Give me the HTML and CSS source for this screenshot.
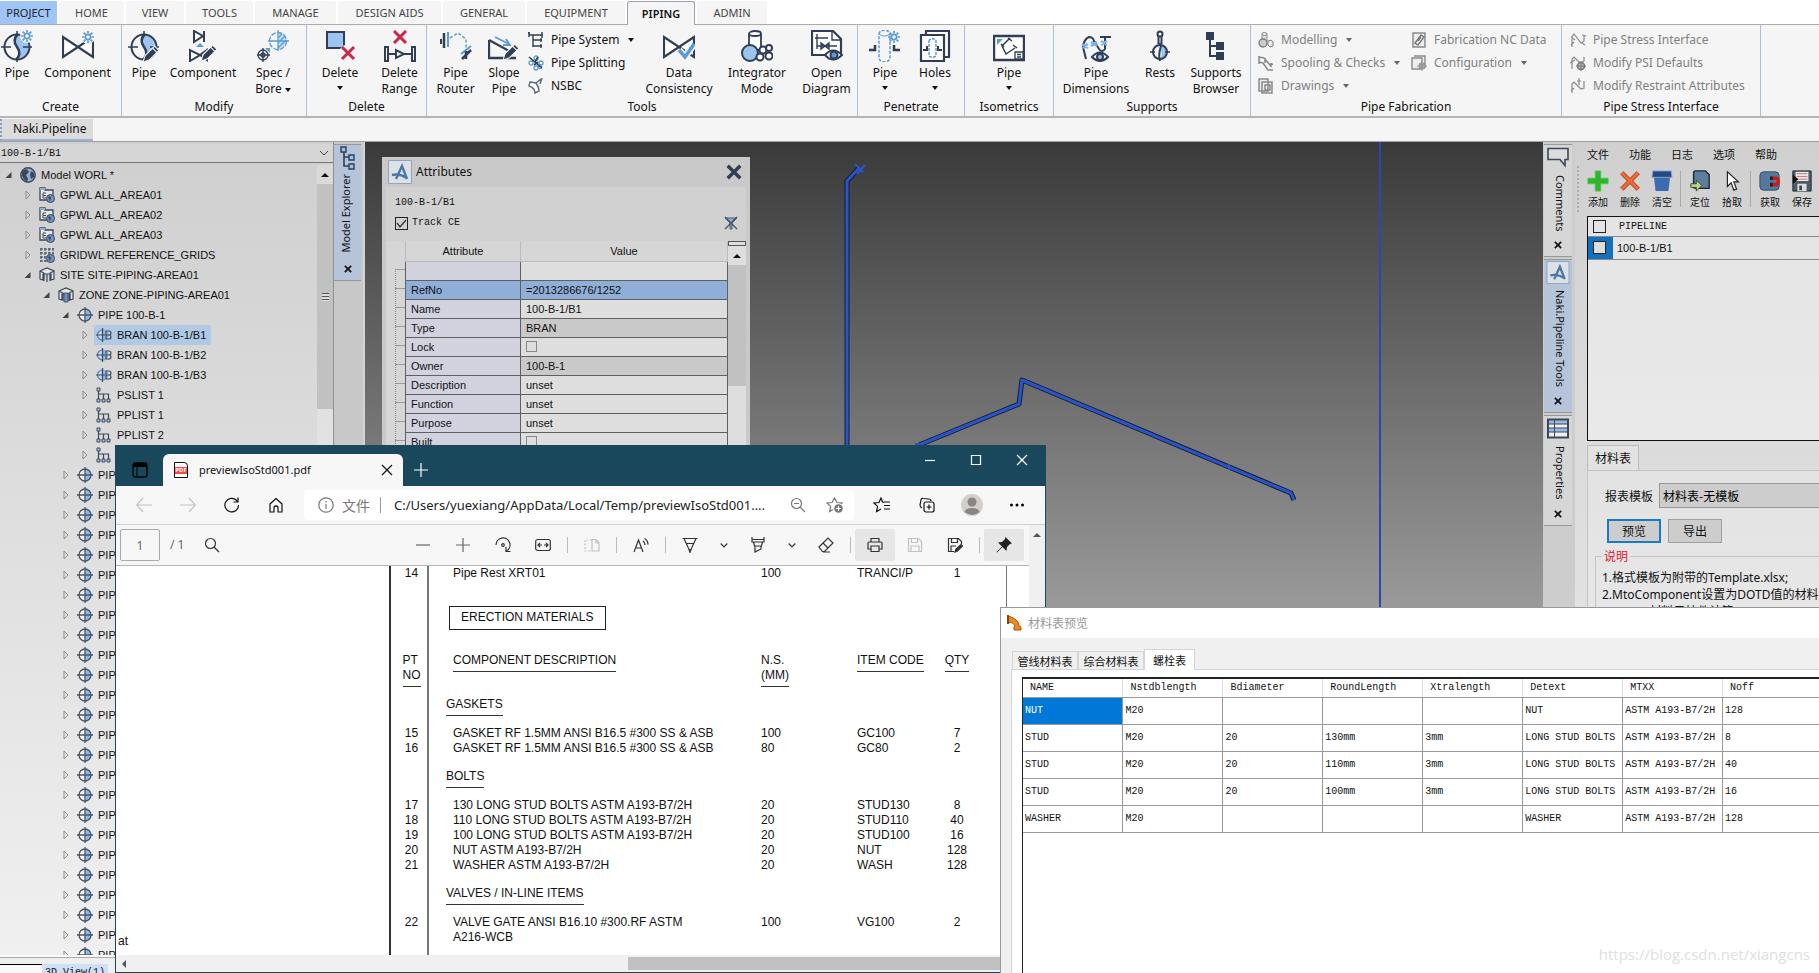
FILE: index.html
```
<!DOCTYPE html>
<html lang="zh">

<head>
    <meta charset="UTF-8">
    <meta name="viewport" content="width=device-width, initial-scale=1.0">
    <title>Naki.Pipeline</title>
    <link rel="stylesheet" href="styles.css">
</head>

<body>
    <!-- 图标 -->
    <svg class="defs" width="0" height="0">
        <symbol id="gear" viewBox="0 0 14 14"><circle cx="7" cy="7" r="3" fill="#fff" stroke="#5b9bd5" stroke-width="2"/><path d="M7 0v3M7 11v3M0 7h3M11 7h3M2 2l2 2M10 10l2 2M12 2l-2 2M4 10l-2 2" stroke="#5b9bd5" stroke-width="2"/></symbol>
        <symbol id="pencil" viewBox="0 0 16 16"><path d="M0 16l2-6 9-9 4 4-9 9z" fill="#2f3e55" stroke="#f5f5f5"/><path d="M9 3l4 4" stroke="#fff"/></symbol>
        <symbol id="ball" viewBox="0 0 32 32"><path d="M16 4a13 13 0 0 1 0 26c5-5 3-9 0-13s-3-9 0-13z" fill="#9cc4f0"/><circle cx="16" cy="17" r="12.500" fill="none" stroke="#2f3e55" stroke-width="2"/><path d="M17 4c-5 5-4 9-1 13s4 8-1 13" fill="none" stroke="#2f3e55" stroke-width="2.500"/><path d="M16 1v5M16 28v4M0 17h10M22 17h9" stroke="#2f3e55" stroke-width="1.500"/></symbol>
        <symbol id="valve" viewBox="0 0 32 32"><path d="M1 7v20L31 7v20z" fill="#fff" stroke="#2f3e55" stroke-width="2.200"/></symbol>
        <symbol id="i-pipe-new" viewBox="0 0 32 32"><use href="#ball"/><circle cx="26" cy="6" r="7" fill="#f5f5f5"/><use href="#gear" x="20" y="0" width="12" height="12"/></symbol>
        <symbol id="i-comp-new" viewBox="0 0 32 32"><use href="#valve"/><circle cx="26" cy="7" r="7" fill="#f5f5f5"/><use href="#gear" x="20" y="1" width="12" height="12"/></symbol>
        <symbol id="i-pipe-mod" viewBox="0 0 32 32"><use href="#ball"/><use href="#pencil" x="15" y="15" width="17" height="17"/></symbol>
        <symbol id="i-comp-mod" viewBox="0 0 32 32"><path d="M7 1v11l9-6zM17 1v11M3 20v11l10-6zM13 25l7 5v-10z" fill="#fff" stroke="#2f3e55" stroke-width="2"/><path d="M9 17l4-4 4 4z" fill="#5b9bd5"/><use href="#pencil" x="14" y="14" width="17" height="17"/></symbol>
        <symbol id="i-spec" viewBox="0 0 32 32"><path d="M21 2a9 9 0 0 1 0 18z" fill="#c4dcf6"/><g fill="none" stroke="#5b9bd5" stroke-width="1.300"><circle cx="21" cy="11" r="8.500" stroke-dasharray="5 1.500"/><path d="M21 0v21M11 11h21M21 18l8-8M21 13l7-7M21 8l4-4M14 11h6"/></g><path d="M8 18h5v5z" fill="#5b9bd5"/><g fill="none" stroke="#2f3e55" stroke-width="1.300"><circle cx="6" cy="25" r="5"/><circle cx="6" cy="25" r="2"/><path d="M6 18v14M0 25h13"/></g></symbol>
        <symbol id="i-delete" viewBox="0 0 32 32"><path d="M3 2h17v16H3z" fill="#9cc4f0" stroke="#2f3e55" stroke-width="2"/><path d="M18 17l12 12M30 17L18 29" stroke="#f5f5f5" stroke-width="6"/><path d="M18 17l12 12M30 17L18 29" stroke="#c8284b" stroke-width="3"/></symbol>
        <symbol id="i-del-range" viewBox="0 0 32 32"><path d="M10 1l12 12M22 1L10 13" stroke="#c8284b" stroke-width="3"/><path d="M1 17h3v14H1zM28 17h3v14h-3zM4 24h8M12 20v8l8-4zM20 24h8" fill="#fff" stroke="#2f3e55" stroke-width="2"/></symbol>
        <symbol id="i-router" viewBox="0 0 32 32"><path d="M4 3v15" stroke="#2f3e55" stroke-width="2.500"/><path d="M1 9v5" stroke="#2f3e55" stroke-width="2"/><path d="M8 2v15" stroke="#5b9bd5" stroke-width="2"/><path d="M10 8l8-5 8 6v9" fill="none" stroke="#5b9bd5" stroke-width="1.500" stroke-dasharray="3 2"/><path d="M21 24l10-8" stroke="#5b9bd5" stroke-width="2"/><path d="M22 29l9-9M26 21v8" stroke="#2f3e55" stroke-width="2.500"/></symbol>
        <symbol id="i-slope" viewBox="0 0 32 32"><path d="M1 10v18h27M1 10l22 12" fill="none" stroke="#2f3e55" stroke-width="2.300"/><path d="M7 7l14 7M15 15l7 0-4-6" fill="none" stroke="#5b9bd5" stroke-width="1.800"/><use href="#pencil" x="15" y="13" width="17" height="17"/></symbol>
        <symbol id="i-consist" viewBox="0 0 32 32"><use href="#valve"/><path d="M16 20l6 7 9-13" fill="none" stroke="#f5f5f5" stroke-width="7"/><path d="M16 20l6 7 9-13" fill="none" stroke="#5b9bd5" stroke-width="3.500"/></symbol>
        <symbol id="i-integr" viewBox="0 0 32 32"><path d="M8 4v16h12V4" fill="#fff" stroke="#2f3e55" stroke-width="1.800"/><ellipse cx="14" cy="3.500" rx="6" ry="2.500" fill="#fff" stroke="#2f3e55" stroke-width="1.800"/><circle cx="9" cy="23" r="8" fill="#9cc4f0" stroke="#2f3e55" stroke-width="2"/><g fill="#fff" stroke="#2f3e55" stroke-width="2"><circle cx="19" cy="27" r="3.500"/><circle cx="28" cy="26" r="3.500"/><circle cx="22" cy="20" r="3.500"/><circle cx="28" cy="18" r="3"/></g></symbol>
        <symbol id="i-diagram" viewBox="0 0 32 32"><path d="M1 1h21l8 8v16H1z" fill="#fff" stroke="#2f3e55" stroke-width="2.200"/><path d="M21 1v9h9M6 4v15M4 8h13M6 16h20M10 13v6l8-6v6z" fill="none" stroke="#2f3e55" stroke-width="1.400"/><path d="M14 25q8-9 17 0-9 9-17 0z" fill="#fff" stroke="#2f3e55" stroke-width="2"/><circle cx="23" cy="25" r="3.500" fill="#5b9bd5" stroke="#2f3e55" stroke-width="2"/></symbol>
        <symbol id="i-pen-pipe" viewBox="0 0 32 32"><path d="M10 4c0-5 11-5 11 0v24c0 5-11 5-11 0z" fill="none" stroke="#5b9bd5" stroke-width="1.500" stroke-dasharray="3 1.500"/><path d="M10 4q5 4 11 0" fill="none" stroke="#5b9bd5"/><path d="M0 20h6v-5M31 20h-6v-5" fill="none" stroke="#2f3e55" stroke-width="2.500"/><use href="#gear" x="19" y="1" width="12" height="12"/></symbol>
        <symbol id="i-holes" viewBox="0 0 32 32"><path d="M7 5V1h23v26h-5" fill="#fff" stroke="#2f3e55" stroke-width="2.200"/><path d="M2 5h23v26H2z" fill="#fff" stroke="#2f3e55" stroke-width="2.200"/><path d="M10 11c0-3 7-3 7 0v14c0 3-7 3-7 0z" fill="none" stroke="#5b9bd5" stroke-width="1.500" stroke-dasharray="3 1"/><path d="M4 20h4v-4M23 20h-4v-4" fill="none" stroke="#2f3e55" stroke-width="2"/></symbol>
        <symbol id="i-iso" viewBox="0 0 32 32"><path d="M1 6h30v24H1z" fill="#fff" stroke="#2f3e55" stroke-width="2.400"/><path d="M4 9h6l-6 6z" fill="#5b9bd5"/><path d="M17 8l-8 8 4 8 9-6M8 14l3 3M15 8l4 3M20 15l4 3" fill="none" stroke="#2f3e55" stroke-width="1.500"/><path d="M22 22h8v7h-8zM24 24.500h4M24 27h4" fill="#fff" stroke="#2f3e55" stroke-width="1.300"/></symbol>
        <symbol id="i-dims" viewBox="0 0 32 32"><path d="M6 29L3 17Q4 9 9 7q4 0 5 4l5 8q3 4 6 0V8M20 7h11" fill="none" stroke="#2f3e55" stroke-width="2"/><path d="M2 14l6 4M8 14l-6 4M11 12l6 4M17 12l-6 4M21 11l6 4M27 11l-6 4" stroke="#7fb5ee" stroke-width="2.500"/><path d="M12 27q8-9 16 0-8 8-16 0z" fill="#fff" stroke="#2f3e55" stroke-width="2"/><circle cx="20" cy="27" r="3" fill="#9cc4f0" stroke="#2f3e55" stroke-width="2"/></symbol>
        <symbol id="i-rests" viewBox="0 0 32 32"><path d="M16 15a7 7 0 0 1 0 15c3-5 1-8 0-15z" fill="#9cc4f0"/><g fill="none" stroke="#2f3e55" stroke-width="2"><circle cx="16" cy="4" r="2.500"/><path d="M14.500 6v8M17.500 6v8M16 13c3 4-3 8 0 18"/><circle cx="16" cy="22" r="7"/><path d="M6 22h5M21 22h5" stroke-width="1.500"/></g></symbol>
        <symbol id="i-browser" viewBox="0 0 32 32"><path d="M6 2h8v8H6zM16 12h8v8h-8zM16 22h8v8h-8z" fill="#2f3e55"/><path d="M10 8v18h7M10 16h7" fill="none" stroke="#2f3e55" stroke-width="2"/></symbol>
        <symbol id="s-system" viewBox="0 0 16 16"><path d="M0 1h2M1 0v5M1 3h14M14 0v6M5 3v12M5 8h9M13 6v4M5 14h9M13 12v4" fill="none" stroke="#2f3e55" stroke-width="1.400"/></symbol>
        <symbol id="s-split" viewBox="0 0 16 16"><g fill="none" stroke="#5b9bd5" stroke-width="1.300"><circle cx="3" cy="8" r="2"/><circle cx="8" cy="3" r="2"/><circle cx="13" cy="8" r="2"/><circle cx="8" cy="13" r="2"/><circle cx="12" cy="12" r="1.500"/></g><path d="M1 2l13 11M7 7l3-5M6 10l4-3" stroke="#2f3e55" stroke-width="1.600"/></symbol>
        <symbol id="s-nsbc" viewBox="0 0 16 16"><path d="M2 4l6 1q3 4 3 8l-4 2q0-5-6-7zM8 5l5-4M12 6l2-6" fill="#fff" stroke="#5f6b7c" stroke-width="1.500"/></symbol>
        <symbol id="s-model" viewBox="0 0 16 16"><path d="M4 2v7h5V2z" fill="#ddd" stroke="#8a8a8a"/><ellipse cx="6.500" cy="2" rx="2.500" ry="1.500" fill="#eee" stroke="#8a8a8a"/><circle cx="5" cy="11" r="4" fill="#ccc" stroke="#7d7d7d" stroke-width="1.300"/><path d="M10 9l3-1 2 2v4l-3 1-2-2z" fill="#eee" stroke="#7d7d7d"/></symbol>
        <symbol id="s-spool" viewBox="0 0 16 16"><path d="M1 1v8M1 2l5 1 6 7 3-1M1 7l4 1 5 7h5M7 3v5M13 8v4" fill="none" stroke="#8a8a8a" stroke-width="1.600"/></symbol>
        <symbol id="s-draw" viewBox="0 0 16 16"><path d="M1 1h9v12H1zM4 4h10v11H4zM7 7h5v5H7z" fill="#eee" stroke="#8a8a8a" stroke-width="1.500"/></symbol>
        <symbol id="s-nc" viewBox="0 0 16 16"><path d="M2 1h12v14H2z" fill="#eee" stroke="#8a8a8a" stroke-width="1.500"/><path d="M4 11l6-8 3 2-6 8zM7 9l3-4" fill="none" stroke="#777" stroke-width="1.400"/></symbol>
        <symbol id="s-conf" viewBox="0 0 16 16"><path d="M3 1h11v12M1 3h10v11H1z" fill="#eee" stroke="#8a8a8a" stroke-width="1.400"/><circle cx="11" cy="11" r="2.500" fill="none" stroke="#999" stroke-width="2"/><path d="M11 6v10M6 11h10M8 8l6 6M14 8l-6 6" stroke="#999"/></symbol>
        <symbol id="s-psi" viewBox="0 0 16 16"><path d="M2 15V5l2-3 7 9 3-2V3M1 13l3-3M1 5l4 3M12 3l4 1M12 11l3 2" fill="none" stroke="#8a8a8a" stroke-width="1.200"/></symbol>
        <symbol id="s-psi-set" viewBox="0 0 16 16"><path d="M2 14V4l2-2 6 6 4-2V2M0 8l5-3" fill="none" stroke="#8a8a8a" stroke-width="1.200"/><circle cx="11" cy="11" r="3.500" fill="#bbb" stroke="#777" stroke-width="1.600"/><path d="M11 6v10M6 11h10" stroke="#777"/></symbol>
        <symbol id="s-psi-mod" viewBox="0 0 16 16"><path d="M2 15V6l2-2 7 7 3-1V3M7 3h4M9 0v7M1 13l3-3" fill="none" stroke="#8a8a8a" stroke-width="1.200"/></symbol>

        <symbol id="t-world" viewBox="0 0 16 16"><circle cx="8" cy="8" r="7.200" fill="#8fb0d6" stroke="#3c4859" stroke-width="1.500"/><path d="M2 4l5-2 2 3-3 3 2 4-1 3Q3 12 2 9zM11 4l3 2v4l-3 2-1-4z" fill="#3c4859"/></symbol>
        <symbol id="t-gpwl" viewBox="0 0 16 16"><path d="M1 1h5v2h8v10H1z" fill="#e6e6e6" stroke="#3c4859" stroke-width="1.300"/><path d="M1 1h5v2H1z" fill="#8fb0d6"/><path d="M4 6v5h3M4 6h3M4 8.500h3" fill="none" stroke="#3c4859"/><circle cx="11.500" cy="11.500" r="4" fill="#6f94c2" stroke="#3c4859"/><path d="M9 10l2-1 1 2-1 3z" fill="#3c4859"/></symbol>
        <symbol id="t-grid" viewBox="0 0 16 16"><path d="M1 2h14M1 6h14M1 10h14M1 14h14M2 1v14M6 1v14M10 1v14M14 1v14" stroke="#3c4859" stroke-dasharray="3 1"/><circle cx="11.500" cy="11.500" r="4" fill="#6f94c2" stroke="#3c4859"/><path d="M9 10l2-1 1 2-1 3z" fill="#3c4859"/></symbol>
        <symbol id="t-site" viewBox="0 0 16 16"><path d="M1 4l7-3 7 3v8l-3 1V7H4v6l-3-1zM1 4l4 2v8M15 4l-4 2v8M8 7v8" fill="#e6e6e6" stroke="#3c4859" stroke-width="1.200"/></symbol>
        <symbol id="t-zone" viewBox="0 0 16 16"><path d="M1 4l7-3 7 3v8l-3 1V7H4v6l-3-1zM1 4l4 2v8M15 4l-4 2v8" fill="#e6e6e6" stroke="#3c4859" stroke-width="1.200"/><path d="M6 6h4v9H6z" fill="#6f94c2" stroke="#3c4859" stroke-width=".8"/></symbol>
        <symbol id="t-pipe" viewBox="0 0 16 16"><circle cx="8" cy="8" r="6" fill="#fff" fill-opacity=".5"/><path d="M8 2a6 6 0 0 1 0 12z" fill="#8fb8ea"/><circle cx="8" cy="8" r="6" fill="none" stroke="#4a5668" stroke-width="1.300"/><path d="M8 0v16M0 8h16" stroke="#4a5668" stroke-width="1.300"/></symbol>
        <symbol id="t-bran" viewBox="0 0 16 16"><circle cx="6.500" cy="8" r="5" fill="#c6d8ee" stroke="#5b7da8" stroke-width="1.200"/><path d="M7 3a5 5 0 0 1 0 10z" fill="#8fb8ea"/><path d="M6.500 1v14M0 8h9" stroke="#3c4859" stroke-width="1.200"/><path d="M10 4v8M10 4h3q2 0 2 2t-2 2h-3M13 8q2 0 2 2t-2 2h-3" fill="none" stroke="#3c4859" stroke-width="1.100"/></symbol>
        <symbol id="t-list" viewBox="0 0 16 16"><path d="M2.500 4v11M2.500 7h10v5M7.500 7v5" fill="none" stroke="#3c4859" stroke-width="1.200"/><path d="M1 1h3v3H1zM1 12h3v3H1zM6 12h3v3H6zM11 12h3v3h-3z" fill="#a9c6ea" stroke="#3c4859"/></symbol>
        <symbol id="open" viewBox="0 0 8 8"><path d="M6.500 1v6H.5z" fill="#444"/></symbol>
        <symbol id="shut" viewBox="0 0 8 8"><path d="M2 0v8l4-4z" fill="none" stroke="#8f8f8f"/></symbol>

        <symbol id="aveva" viewBox="0 0 24 24"><path d="M.5.500h23v23H.5z" fill="#dde1e6" stroke="#8fa3c0"/><path d="M8 19l6-13 5 13M4 15q7-2 15 3" fill="none" stroke="#4a76a8" stroke-width="2.400"/></symbol>
        <symbol id="cross" viewBox="0 0 14 14"><path d="M1.500 1.500l11 11M12.500 1.500l-11 11" stroke="currentColor" stroke-width="3"/></symbol>
        <symbol id="explorer" viewBox="0 0 16 24"><path d="M4 6v14h6M4 11h6" fill="none" stroke="#2f3e55" stroke-width="1.600"/><path d="M1 1h5v5H1zM9 9h5v5H9zM9 18h5v5H9z" fill="#9cc4f0" stroke="#2f3e55" stroke-width="1.400"/></symbol>
        <symbol id="comment" viewBox="0 0 24 22"><path d="M2 2h20v11h-3v6l-5-6H2z" fill="#dcdcdc" stroke="#3c4859" stroke-width="1.600"/></symbol>
        <symbol id="props" viewBox="0 0 24 22"><path d="M1 1h22v20H1z" fill="#3c4859"/><path d="M3 3h5v3H3zM9 3h12v3H9zM3 11h5v3H3zM9 11h12v3H9z" fill="#9cb9e4"/><path d="M3 7h5v3H3zM9 7h12v3H9zM3 15h5v4H3zM9 15h12v4H9z" fill="#eee"/></symbol>

        <symbol id="r-add" viewBox="0 0 24 24"><path d="M9 1h6v8h8v6h-8v8H9v-8H1V9h8z" fill="#2db52d" stroke="#4fc34f"/></symbol>
        <symbol id="r-del" viewBox="0 0 24 24"><path d="M3 3l18 18M21 3L3 21" stroke="#b33a16" stroke-width="5"/><path d="M3 3l18 18M21 3L3 21" stroke="#f06a3a" stroke-width="3"/></symbol>
        <symbol id="r-clear" viewBox="0 0 24 24"><path d="M3 6h18l-2 17H5z" fill="#3d6bb0"/><path d="M2 1h20l1 7H1z" fill="#234a86" stroke="#8fa9cc"/></symbol>
        <symbol id="r-locate" viewBox="0 0 24 24"><path d="M5 3q0-2 2-2h11l4 4v15H7q-2 0-2-2z" fill="#5e7c9c" stroke="#1b2633" stroke-width="1.500"/><path d="M2 15h6v-4l6 6-6 6v-4H2z" fill="#b9d48c" stroke="#34462a"/></symbol>
        <symbol id="r-pick" viewBox="0 0 24 24"><path d="M7 2v16l4-4 3 8 3-1-3-8h5z" fill="#fff" stroke="#222" stroke-width="1.300"/></symbol>
        <symbol id="r-fetch" viewBox="0 0 24 24"><rect x="1" y="2" width="21" height="20" rx="4" fill="#56789c" stroke="#2f4966"/><path d="M13 9h5q3 0 3 3.500t-3 3.500h-5" fill="none" stroke="#c81e1e" stroke-width="4"/><path d="M12 7h3v4h-3zM12 14h3v4h-3z" fill="#222"/></symbol>
        <symbol id="r-save" viewBox="0 0 24 24"><path d="M2 1h20v22H2z" fill="#4d5b6b" stroke="#1b2633"/><path d="M5 2h14v10H5z" fill="#eee"/><path d="M6 4h12M6 7h12M6 10h12" stroke="#c66"/><path d="M7 15h10v8H7z" fill="#ddd"/><path d="M9 17h3v5H9z" fill="#444"/><path d="M2 5l6 5-6 5z" fill="#111"/></symbol>
        <symbol id="elbow" viewBox="0 0 16 16"><path d="M1 1l3 1q8 3 8 9l2 1v3H7v-3l1-1q-1-3-5-4l-2 2z" fill="#ee8a1d" stroke="#a8540a"/><path d="M1 0v9" stroke="#8a4306" stroke-width="2"/></symbol>

        <symbol id="b-tabs" viewBox="0 0 16 16"><rect x="1" y="1" width="14" height="14" rx="2.500" fill="none" stroke="#000" stroke-width="1.400"/><path d="M1 1h14v4H1z"/><path d="M5 4v11" stroke="#000"/></symbol>
        <symbol id="b-close" viewBox="0 0 16 16"><path d="M3 3l10 10M13 3L3 13"/></symbol>
        <symbol id="b-plus" viewBox="0 0 16 16"><path d="M8 1v14M1 8h14"/></symbol>
        <symbol id="b-minus" viewBox="0 0 16 16"><path d="M1 8h14"/></symbol>
        <symbol id="b-min" viewBox="0 0 16 16"><path d="M3 8.500h10"/></symbol>
        <symbol id="b-max" viewBox="0 0 16 16"><path d="M3.500 3.500h9v9h-9z"/></symbol>
        <symbol id="b-back" viewBox="0 0 16 16"><path d="M16 8H1M7 1L.7 8 7 15"/></symbol>
        <symbol id="b-fwd" viewBox="0 0 16 16"><path d="M0 8h15M9 1l6.300 7L9 15"/></symbol>
        <symbol id="b-reload" viewBox="0 0 16 16"><path d="M14.500 8a6.800 6.800 0 1 1-2-4.700L14 5M14 .500V5h-4.500"/></symbol>
        <symbol id="b-home" viewBox="0 0 16 16"><path d="M2 7l6-5.500L14 7v8h-4v-5q-2-2-4 0v5H2z" stroke-linejoin="round"/></symbol>
        <symbol id="b-info" viewBox="0 0 16 16"><circle cx="8" cy="8" r="7.200"/><path d="M8 7v5M8 4v1.500"/></symbol>
        <symbol id="b-find" viewBox="0 0 16 16"><circle cx="6.500" cy="6.500" r="5"/><path d="M10 10l5 5"/></symbol>
        <symbol id="b-zoomout" viewBox="0 0 16 16"><circle cx="6.500" cy="6.500" r="5"/><path d="M10 10l5 5M4 6.500h5"/></symbol>
        <symbol id="b-star" viewBox="0 0 18 16"><path d="M15 7l1-1-5-.500L8.500 1 6 5.500 1 6l3.600 3.400-1 5.100L7 12.500"/><circle cx="12.500" cy="11.500" r="4.300" fill="currentColor" stroke="none"/><path d="M12.500 9v5M10 11.500h5" stroke="#fff"/></symbol>
        <symbol id="b-favs" viewBox="0 0 18 16"><path d="M11 5.500L9.500 5 8 1 6 5.500 1 6l3.600 3.400-1 5.100L8 12M11 5h6M11 8.500h6M11 12h6"/></symbol>
        <symbol id="b-coll" viewBox="0 0 16 16"><rect x="5" y="5" width="10" height="10" rx="2"/><path d="M10 7.500v5M7.500 10h5M3 11Q1 10 1 8l1-5q0-2 2-1.500l6 .500q2 0 2 2"/></symbol>
        <symbol id="b-rotate" viewBox="0 0 16 16"><path d="M1 8a7 7 0 1 1 10.500 6M11 10v4.500h4.500"/><circle cx="8" cy="8" r="1.300"/></symbol>
        <symbol id="b-fit" viewBox="0 0 16 16"><rect x=".7" y="2.500" width="14.600" height="11" rx="2"/><path d="M3 8h4M9 8h4M5 6L3 8l2 2M11 6l2 2-2 2"/></symbol>
        <symbol id="b-pages" viewBox="0 0 16 16"><path d="M8 3H1v11h7" stroke-dasharray="2 1.500"/><path d="M8 2.500h4l3 3V14H8zM12 2.500V6h3"/></symbol>
        <symbol id="b-read" viewBox="0 0 16 16"><path d="M1 15L5.500 3 10 15M2.500 11h6M10 4q2 1.500 2 4M11.500 1.500q3.500 2 3.500 6"/></symbol>
        <symbol id="b-pen" viewBox="0 0 16 16"><path d="M.5 1.500h15M2 1.500l5 11h2l5-11M4 6.500h8M7 12.500l1 3 1-3"/></symbol>
        <symbol id="b-mark" viewBox="0 0 16 16"><path d="M2 0v5h12V0M2 2.500h12M3.500 5l1 4h7l1-4M5 9v6l6-3V9"/></symbol>
        <symbol id="b-erase" viewBox="0 0 16 16"><path d="M1 10L10 1l5 5-8.500 8.500h-2zM5 6l5 5M5 15h7"/></symbol>
        <symbol id="b-chev" viewBox="0 0 8 8"><path d="M.7 2.500L4 5.800l3.300-3.300"/></symbol>
        <symbol id="b-print" viewBox="0 0 16 16"><path d="M4 5V1.500h8V5M4 12H1V6q0-1 1-1h12q1 0 1 1v6h-3M4 9h8v5.500H4z"/></symbol>
        <symbol id="b-save" viewBox="0 0 16 16"><path d="M1.500 1.500h10l3 3v10h-13zM4.500 1.500v4h6v-4M4 14.500V9h8v5.500"/></symbol>
        <symbol id="b-saveas" viewBox="0 0 16 16"><path d="M7 14.500H1.500v-13h10l3 3V7M4.500 1.500v4h6v-4M4 14.500V9h5"/><path d="M8 15l1-3 5-4.500 1.500 1.500-5 5z" fill="currentColor"/></symbol>
        <symbol id="b-pin" viewBox="0 0 16 16"><path d="M9.500 0L16 6.500 14 7l-3 3-.5 4L6.500 10 1 15.500l-.5-.5L6 9.500 2 5.500 6 5l3-3z" fill="#222"/></symbol>
        <symbol id="b-user" viewBox="0 0 22 22"><circle cx="11" cy="11" r="11" fill="#d2cfcc"/><circle cx="11" cy="8" r="4.500" fill="#8a8583"/><path d="M3.500 18q1-4 7.500-4t7.500 4q-7 6-15 0z" fill="#8a8583"/></symbol>
        <symbol id="b-dots" viewBox="0 0 16 16"><circle cx="2.500" cy="8" r="1.500"/><circle cx="8" cy="8" r="1.500"/><circle cx="13.500" cy="8" r="1.500"/></symbol>
    </svg>

    <nav class="tabs">
        <button class="project">PROJECT</button>
        <button class="t-home">HOME</button>
        <button class="t-view">VIEW</button>
        <button class="t-tools">TOOLS</button>
        <button class="t-manage">MANAGE</button>
        <button class="t-design">DESIGN AIDS</button>
        <button class="t-general">GENERAL</button>
        <button class="t-equip">EQUIPMENT</button>
        <button class="active">PIPING</button>
        <button class="t-admin">ADMIN</button>
    </nav>

    <div class="ribbon">
        <section class="group g-create">
            <div class="tools">
                <button><svg><use href="#i-pipe-new"/></svg>Pipe</button>
                <button><svg><use href="#i-comp-new"/></svg>Component</button>
            </div>
            <h2>Create</h2>
        </section>
        <section class="group g-modify">
            <div class="tools">
                <button><svg><use href="#i-pipe-mod"/></svg>Pipe</button>
                <button><svg><use href="#i-comp-mod"/></svg>Component</button>
                <button><svg><use href="#i-spec"/></svg>Spec /<span>Bore<i class="drop"></i></span></button>
            </div>
            <h2>Modify</h2>
        </section>
        <section class="group g-delete">
            <div class="tools">
                <button><svg><use href="#i-delete"/></svg>Delete<i class="drop below"></i></button>
                <button><svg><use href="#i-del-range"/></svg>Delete<br>Range</button>
            </div>
            <h2>Delete</h2>
        </section>
        <section class="group g-tools">
            <div class="tools">
                <button><svg><use href="#i-router"/></svg>Pipe<br>Router</button>
                <button><svg><use href="#i-slope"/></svg>Slope<br>Pipe</button>
                <div class="small">
                    <button><svg><use href="#s-system"/></svg>Pipe System<i class="drop"></i></button>
                    <button><svg><use href="#s-split"/></svg>Pipe Splitting</button>
                    <button><svg><use href="#s-nsbc"/></svg>NSBC</button>
                </div>
                <button><svg><use href="#i-consist"/></svg>Data<br>Consistency</button>
                <button><svg><use href="#i-integr"/></svg>Integrator<br>Mode</button>
                <button><svg><use href="#i-diagram"/></svg>Open<br>Diagram</button>
            </div>
            <h2>Tools</h2>
        </section>
        <section class="group g-penetrate">
            <div class="tools">
                <button><svg><use href="#i-pen-pipe"/></svg>Pipe<i class="drop below"></i></button>
                <button><svg><use href="#i-holes"/></svg>Holes<i class="drop below"></i></button>
            </div>
            <h2>Penetrate</h2>
        </section>
        <section class="group g-iso">
            <div class="tools">
                <button><svg><use href="#i-iso"/></svg>Pipe<i class="drop below"></i></button>
            </div>
            <h2>Isometrics</h2>
        </section>
        <section class="group g-supports">
            <div class="tools">
                <button><svg><use href="#i-dims"/></svg>Pipe<br>Dimensions</button>
                <button><svg><use href="#i-rests"/></svg>Rests</button>
                <button><svg><use href="#i-browser"/></svg>Supports<br>Browser</button>
            </div>
            <h2>Supports</h2>
        </section>
        <section class="group g-fab">
            <div class="tools">
                <div class="small off">
                    <button><svg><use href="#s-model"/></svg>Modelling<i class="drop"></i></button>
                    <button><svg><use href="#s-spool"/></svg>Spooling &amp; Checks<i class="drop"></i></button>
                    <button><svg><use href="#s-draw"/></svg>Drawings<i class="drop"></i></button>
                </div>
                <div class="small off">
                    <button><svg><use href="#s-nc"/></svg>Fabrication NC Data</button>
                    <button><svg><use href="#s-conf"/></svg>Configuration<i class="drop"></i></button>
                </div>
            </div>
            <h2>Pipe Fabrication</h2>
        </section>
        <section class="group g-stress">
            <div class="tools">
                <div class="small off">
                    <button><svg><use href="#s-psi"/></svg>Pipe Stress Interface</button>
                    <button><svg><use href="#s-psi-set"/></svg>Modify PSI Defaults</button>
                    <button><svg><use href="#s-psi-mod"/></svg>Modify Restraint Attributes</button>
                </div>
            </div>
            <h2>Pipe Stress Interface</h2>
        </section>
    </div>

    <div class="addin"><button>Naki.Pipeline</button></div>

    <main class="work">
        <!-- 模型树 -->
        <aside class="explorer">
            <select class="current" aria-label="Current element"><option>100-B-1/B1</option></select>
            <div class="tree-wrap">
                <ul class="tree">
                    <li><svg class="tw"><use href="#open"/></svg><svg><use href="#t-world"/></svg><span>Model WORL *</span></li>
                    <li class="l1"><svg class="tw"><use href="#shut"/></svg><svg><use href="#t-gpwl"/></svg><span>GPWL ALL_AREA01</span></li>
                    <li class="l1"><svg class="tw"><use href="#shut"/></svg><svg><use href="#t-gpwl"/></svg><span>GPWL ALL_AREA02</span></li>
                    <li class="l1"><svg class="tw"><use href="#shut"/></svg><svg><use href="#t-gpwl"/></svg><span>GPWL ALL_AREA03</span></li>
                    <li class="l1"><svg class="tw"><use href="#shut"/></svg><svg><use href="#t-grid"/></svg><span>GRIDWL REFERENCE_GRIDS</span></li>
                    <li class="l1"><svg class="tw"><use href="#open"/></svg><svg><use href="#t-site"/></svg><span>SITE SITE-PIPING-AREA01</span></li>
                    <li class="l2"><svg class="tw"><use href="#open"/></svg><svg><use href="#t-zone"/></svg><span>ZONE ZONE-PIPING-AREA01</span></li>
                    <li class="l3"><svg class="tw"><use href="#open"/></svg><svg><use href="#t-pipe"/></svg><span>PIPE 100-B-1</span></li>
                    <li class="l4"><svg class="tw"><use href="#shut"/></svg><div class="sel"><svg><use href="#t-bran"/></svg><span>BRAN 100-B-1/B1</span></div></li>
                    <li class="l4"><svg class="tw"><use href="#shut"/></svg><svg><use href="#t-bran"/></svg><span>BRAN 100-B-1/B2</span></li>
                    <li class="l4"><svg class="tw"><use href="#shut"/></svg><svg><use href="#t-bran"/></svg><span>BRAN 100-B-1/B3</span></li>
                    <li class="l4"><svg class="tw"><use href="#shut"/></svg><svg><use href="#t-list"/></svg><span>PSLIST 1</span></li>
                    <li class="l4"><svg class="tw"><use href="#shut"/></svg><svg><use href="#t-list"/></svg><span>PPLIST 1</span></li>
                    <li class="l4"><svg class="tw"><use href="#shut"/></svg><svg><use href="#t-list"/></svg><span>PPLIST 2</span></li>
                    <li class="l4"><svg class="tw"><use href="#shut"/></svg><svg><use href="#t-list"/></svg></li>
                    <li class="l3"><svg class="tw"><use href="#shut"/></svg><svg><use href="#t-pipe"/></svg><span>PIPE</span></li>
                    <li class="l3"><svg class="tw"><use href="#shut"/></svg><svg><use href="#t-pipe"/></svg><span>PIPE</span></li>
                    <li class="l3"><svg class="tw"><use href="#shut"/></svg><svg><use href="#t-pipe"/></svg><span>PIPE</span></li>
                    <li class="l3"><svg class="tw"><use href="#shut"/></svg><svg><use href="#t-pipe"/></svg><span>PIPE</span></li>
                    <li class="l3"><svg class="tw"><use href="#shut"/></svg><svg><use href="#t-pipe"/></svg><span>PIPE</span></li>
                    <li class="l3"><svg class="tw"><use href="#shut"/></svg><svg><use href="#t-pipe"/></svg><span>PIPE</span></li>
                    <li class="l3"><svg class="tw"><use href="#shut"/></svg><svg><use href="#t-pipe"/></svg><span>PIPE</span></li>
                    <li class="l3"><svg class="tw"><use href="#shut"/></svg><svg><use href="#t-pipe"/></svg><span>PIPE</span></li>
                    <li class="l3"><svg class="tw"><use href="#shut"/></svg><svg><use href="#t-pipe"/></svg><span>PIPE</span></li>
                    <li class="l3"><svg class="tw"><use href="#shut"/></svg><svg><use href="#t-pipe"/></svg><span>PIPE</span></li>
                    <li class="l3"><svg class="tw"><use href="#shut"/></svg><svg><use href="#t-pipe"/></svg><span>PIPE</span></li>
                    <li class="l3"><svg class="tw"><use href="#shut"/></svg><svg><use href="#t-pipe"/></svg><span>PIPE</span></li>
                    <li class="l3"><svg class="tw"><use href="#shut"/></svg><svg><use href="#t-pipe"/></svg><span>PIPE</span></li>
                    <li class="l3"><svg class="tw"><use href="#shut"/></svg><svg><use href="#t-pipe"/></svg><span>PIPE</span></li>
                    <li class="l3"><svg class="tw"><use href="#shut"/></svg><svg><use href="#t-pipe"/></svg><span>PIPE</span></li>
                    <li class="l3"><svg class="tw"><use href="#shut"/></svg><svg><use href="#t-pipe"/></svg><span>PIPE</span></li>
                    <li class="l3"><svg class="tw"><use href="#shut"/></svg><svg><use href="#t-pipe"/></svg><span>PIPE</span></li>
                    <li class="l3"><svg class="tw"><use href="#shut"/></svg><svg><use href="#t-pipe"/></svg><span>PIPE</span></li>
                    <li class="l3"><svg class="tw"><use href="#shut"/></svg><svg><use href="#t-pipe"/></svg><span>PIPE</span></li>
                    <li class="l3"><svg class="tw"><use href="#shut"/></svg><svg><use href="#t-pipe"/></svg><span>PIPE</span></li>
                    <li class="l3"><svg class="tw"><use href="#shut"/></svg><svg><use href="#t-pipe"/></svg><span>PIPE</span></li>
                    <li class="l3"><svg class="tw"><use href="#shut"/></svg><svg><use href="#t-pipe"/></svg><span>PIPE</span></li>
                    <li class="l3"><svg class="tw"><use href="#shut"/></svg><svg><use href="#t-pipe"/></svg><span>PIPE</span></li>
                    <li class="l3"><svg class="tw"><use href="#shut"/></svg><svg><use href="#t-pipe"/></svg><span>PIPE</span></li>
                    <li class="l3"><svg class="tw"><use href="#shut"/></svg><svg><use href="#t-pipe"/></svg><span>PIPE</span></li>
                </ul>
                <div class="scroll"><i class="up"></i><div class="thumb"><i class="grip"></i></div></div>
            </div>
        </aside>
        <div class="strip left">
            <div class="side on">
                <svg class="tall"><use href="#explorer"/></svg>
                <span class="turn-up">Model Explorer</span>
                <button aria-label="Close Model Explorer"><svg><use href="#cross"/></svg></button>
            </div>
        </div>

        <!-- 三维视图 -->
        <div class="view">
            <svg class="scene">
                <path d="M1015 0v830" stroke="#2b49a8" stroke-width="2"/>
                <g fill="none" stroke-linejoin="round">
                    <path d="M494 26l-12 13v320M554 303l100-41 3-24 269 113 3 7" stroke="#131c3c" stroke-width="5"/>
                    <path d="M494 26l-12 13v320M554 303l100-41 3-24 269 113 3 7" stroke="#2c55c4" stroke-width="3"/>
                    <path d="M490 22l8 8M492 32l8-9M864 322v6M550 302h8" stroke="#2c55c4" stroke-width="2"/>
                </g>
            </svg>
            <section class="attrs">
                <header>
                    <svg class="logo"><use href="#aveva"/></svg>
                    <h3>Attributes</h3>
                    <button aria-label="Close"><svg><use href="#cross"/></svg></button>
                </header>
                <div class="attrs-top">
                    <div class="elem">100-B-1/B1</div>
                    <label><input type="checkbox" checked>Track CE</label>
                    <svg class="filter" viewBox="0 0 14 14"><path d="M1 2h12L8 7v6H6V7z" fill="#8fb0d6" stroke="#4a5668"/><path d="M1 1l12 12M13 1L1 13" stroke="#4a5668" stroke-width="1.400"/></svg>
                </div>
                <div class="attrs-grid">
                    <div class="gutter"></div>
                    <table>
                        <thead><tr><th class="name">Attribute</th><th>Value</th></tr></thead>
                        <tbody>
                            <tr><td></td><td></td></tr>
                            <tr class="hit"><td>RefNo</td><td>=2013286676/1252</td></tr>
                            <tr><td>Name</td><td>100-B-1/B1</td></tr>
                            <tr class="ro"><td>Type</td><td>BRAN</td></tr>
                            <tr><td>Lock</td><td><input type="checkbox" aria-label="Lock"></td></tr>
                            <tr class="ro"><td>Owner</td><td>100-B-1</td></tr>
                            <tr><td>Description</td><td>unset</td></tr>
                            <tr><td>Function</td><td>unset</td></tr>
                            <tr><td>Purpose</td><td>unset</td></tr>
                            <tr><td>Built</td><td><input type="checkbox" aria-label="Built"></td></tr>
                        </tbody>
                    </table>
                    <div class="scroll"><i class="split"></i><i class="up"></i><div class="thumb"></div></div>
                </div>
            </section>
        </div>

        <div class="strip right">
            <div class="side">
                <svg class="wide"><use href="#comment"/></svg>
                <span>Comments</span>
                <button aria-label="Close Comments"><svg><use href="#cross"/></svg></button>
            </div>
            <div class="side on">
                <svg class="wide"><use href="#aveva"/></svg>
                <span>Naki.Pipeline Tools</span>
                <button aria-label="Close Tools"><svg><use href="#cross"/></svg></button>
            </div>
            <div class="side">
                <svg class="wide"><use href="#props"/></svg>
                <span>Properties</span>
                <button aria-label="Close Properties"><svg><use href="#cross"/></svg></button>
            </div>
        </div>

        <!-- 管道工具 -->
        <aside class="naki">
            <div class="menu"><button>文件</button><button>功能</button><button>日志</button><button>选项</button><button>帮助</button></div>
            <div class="bar">
                <button><svg><use href="#r-add"/></svg>添加</button>
                <button><svg><use href="#r-del"/></svg>删除</button>
                <button><svg><use href="#r-clear"/></svg>清空</button>
                <i></i>
                <button><svg><use href="#r-locate"/></svg>定位</button>
                <button><svg><use href="#r-pick"/></svg>拾取</button>
                <i></i>
                <button><svg><use href="#r-fetch"/></svg>获取</button>
                <button><svg><use href="#r-save"/></svg>保存</button>
            </div>
            <div class="pipes">
                <table>
                    <tr><th class="chk"><input type="checkbox" aria-label="All"></th><th>PIPELINE</th></tr>
                    <tr><td class="chk"><input type="checkbox" aria-label="100-B-1/B1"></td><td>100-B-1/B1</td></tr>
                </table>
            </div>
            <button class="mto-tab">材料表</button>
            <div class="mto">
                <div class="field"><label for="tpl">报表模板</label><select id="tpl"><option>材料表-无模板</option></select></div>
                <div class="acts"><button class="main">预览</button><button>导出</button></div>
                <fieldset>
                    <legend>说明</legend>
                    <p>1.格式模板为附带的Template.xlsx;</p>
                    <p>2.MtoComponent设置为DOTD值的材料不统计;</p>
                    <p>3.STUDS材料只按件计算;</p>
                </fieldset>
            </div>
        </aside>
    </main>
    <footer class="views"><div class="blank"></div><button>3D View(1)</button></footer>

    <!-- PDF 窗口 -->
    <section class="edge">
        <header class="edge-title">
            <svg class="ic"><use href="#b-tabs"/></svg>
            <div class="edge-tab">
                <i class="pdf-ico">PDF</i>
                <span>previewIsoStd001.pdf</span>
                <button aria-label="Close tab"><svg class="ic line"><use href="#b-close"/></svg></button>
            </div>
            <button class="new" aria-label="New tab"><svg class="ic line"><use href="#b-plus"/></svg></button>
            <div class="win">
                <button aria-label="Minimize"><svg class="ic line"><use href="#b-min"/></svg></button>
                <button aria-label="Maximize"><svg class="ic line"><use href="#b-max"/></svg></button>
                <button aria-label="Close"><svg class="ic line"><use href="#b-close"/></svg></button>
            </div>
        </header>
        <div class="edge-nav">
            <button class="faint" aria-label="Back"><svg class="ic line"><use href="#b-back"/></svg></button>
            <button class="faint" aria-label="Forward"><svg class="ic line"><use href="#b-fwd"/></svg></button>
            <button aria-label="Reload"><svg class="ic line"><use href="#b-reload"/></svg></button>
            <button aria-label="Home"><svg class="ic line"><use href="#b-home"/></svg></button>
            <div class="addr">
                <svg class="ic line"><use href="#b-info"/></svg>
                <span>文件</span>
                <input type="text" aria-label="Address" value="C:/Users/yuexiang/AppData/Local/Temp/previewIsoStd001....">
                <svg class="ic line"><use href="#b-zoomout"/></svg>
                <svg class="ic line"><use href="#b-star"/></svg>
            </div>
            <button aria-label="Favorites"><svg class="wide-ic line"><use href="#b-favs"/></svg></button>
            <button aria-label="Collections"><svg class="ic line"><use href="#b-coll"/></svg></button>
            <button aria-label="Profile"><svg class="user"><use href="#b-user"/></svg></button>
            <button aria-label="More"><svg class="ic"><use href="#b-dots"/></svg></button>
        </div>
        <div class="edge-body">
            <div class="edge-main">
                <div class="pdf-bar">
                    <input type="text" aria-label="Page" value="1"><span class="of">/ 1</span>
                    <button aria-label="Find"><svg class="ic line"><use href="#b-find"/></svg></button>
                    <div class="pdf-tools">
                        <button class="dim" aria-label="Zoom out"><svg class="ic line"><use href="#b-minus"/></svg></button>
                        <button class="dim" aria-label="Zoom in"><svg class="ic line"><use href="#b-plus"/></svg></button>
                        <button aria-label="Rotate"><svg class="ic line"><use href="#b-rotate"/></svg></button>
                        <button aria-label="Fit"><svg class="ic line"><use href="#b-fit"/></svg></button>
                        <i></i>
                        <button class="faint" aria-label="Page view"><svg class="ic line"><use href="#b-pages"/></svg></button>
                        <i></i>
                        <button aria-label="Read aloud"><svg class="ic line"><use href="#b-read"/></svg></button>
                        <i></i>
                        <button aria-label="Draw"><svg class="ic line"><use href="#b-pen"/></svg></button>
                        <button class="chev" aria-label="Draw options"><svg class="line"><use href="#b-chev"/></svg></button>
                        <button aria-label="Highlight"><svg class="ic line"><use href="#b-mark"/></svg></button>
                        <button class="chev" aria-label="Highlight options"><svg class="line"><use href="#b-chev"/></svg></button>
                        <button aria-label="Erase"><svg class="ic line"><use href="#b-erase"/></svg></button>
                        <i></i>
                        <button class="down" aria-label="Print"><svg class="ic line"><use href="#b-print"/></svg></button>
                        <button class="faint" aria-label="Save"><svg class="ic line"><use href="#b-save"/></svg></button>
                        <button aria-label="Save as"><svg class="ic line"><use href="#b-saveas"/></svg></button>
                        <i></i>
                        <button class="down" aria-label="Pin toolbar"><svg class="ic"><use href="#b-pin"/></svg></button>
                    </div>
                </div>
                <div class="doc">
                    <div class="rest">at</div>
                    <div class="sheet">
                        <table>
                            <colgroup><col class="c-no"><col class="c-desc"><col class="c-ns"><col class="c-code"><col class="c-qty"><col></colgroup>
                            <tr><td>14</td><td>Pipe Rest XRT01</td><td>100</td><td>TRANCI/P</td><td>1</td><td></td></tr>
                            <tr class="title"><td></td><td colspan="5"><b>ERECTION MATERIALS</b></td></tr>
                            <tr class="head"><th><span>PT<br>NO</span></th><th><span>COMPONENT DESCRIPTION</span></th><th><span>N.S.<br>(MM)</span></th><th><span>ITEM CODE</span></th><th><span>QTY</span></th><th></th></tr>
                            <tr class="sec"><td></td><td colspan="5"><span>GASKETS</span></td></tr>
                            <tr class="first"><td>15</td><td>GASKET RF 1.5MM ANSI B16.5 #300 SS &amp; ASB</td><td>100</td><td>GC100</td><td>7</td><td></td></tr>
                            <tr><td>16</td><td>GASKET RF 1.5MM ANSI B16.5 #300 SS &amp; ASB</td><td>80</td><td>GC80</td><td>2</td><td></td></tr>
                            <tr class="sec"><td></td><td colspan="5"><span>BOLTS</span></td></tr>
                            <tr class="first"><td>17</td><td>130 LONG STUD BOLTS ASTM A193-B7/2H</td><td>20</td><td>STUD130</td><td>8</td><td></td></tr>
                            <tr><td>18</td><td>110 LONG STUD BOLTS ASTM A193-B7/2H</td><td>20</td><td>STUD110</td><td>40</td><td></td></tr>
                            <tr><td>19</td><td>100 LONG STUD BOLTS ASTM A193-B7/2H</td><td>20</td><td>STUD100</td><td>16</td><td></td></tr>
                            <tr><td>20</td><td>NUT ASTM A193-B7/2H</td><td>20</td><td>NUT</td><td>128</td><td></td></tr>
                            <tr><td>21</td><td>WASHER ASTM A193-B7/2H</td><td>20</td><td>WASH</td><td>128</td><td></td></tr>
                            <tr class="sec"><td></td><td colspan="5"><span>VALVES / IN-LINE ITEMS</span></td></tr>
                            <tr class="first"><td>22</td><td>VALVE GATE ANSI B16.10 #300.RF ASTM<br>A216-WCB</td><td>100</td><td>VG100</td><td>2</td><td></td></tr>
                            <tr class="fill"><td></td><td></td><td></td><td></td><td></td><td></td></tr>
                        </table>
                    </div>
                </div>
                <div class="hscroll"><i></i><div></div></div>
            </div>
            <div class="scroll"><i class="up"></i></div>
        </div>
    </section>

    <!-- 材料表预览 -->
    <section class="preview">
        <header><svg><use href="#elbow"/></svg>材料表预览</header>
        <div class="preview-tabs"><button>管线材料表</button><button>综合材料表</button><button class="active">螺栓表</button></div>
        <div class="preview-page">
            <div class="preview-box">
                <table>
                    <tr><th>NAME</th><th>Nstdblength</th><th>Bdiameter</th><th>RoundLength</th><th>Xtralength</th><th>Detext</th><th>MTXX</th><th>Noff</th></tr>
                    <tr><td class="cur">NUT</td><td>M20</td><td></td><td></td><td></td><td>NUT</td><td>ASTM A193-B7/2H</td><td>128</td></tr>
                    <tr><td>STUD</td><td>M20</td><td>20</td><td>130mm</td><td>3mm</td><td>LONG STUD BOLTS</td><td>ASTM A193-B7/2H</td><td>8</td></tr>
                    <tr><td>STUD</td><td>M20</td><td>20</td><td>110mm</td><td>3mm</td><td>LONG STUD BOLTS</td><td>ASTM A193-B7/2H</td><td>40</td></tr>
                    <tr><td>STUD</td><td>M20</td><td>20</td><td>100mm</td><td>3mm</td><td>LONG STUD BOLTS</td><td>ASTM A193-B7/2H</td><td>16</td></tr>
                    <tr><td>WASHER</td><td>M20</td><td></td><td></td><td></td><td>WASHER</td><td>ASTM A193-B7/2H</td><td>128</td></tr>
                </table>
                <p class="mark">https://blog.csdn.net/xiangcns</p>
            </div>
        </div>
    </section>
</body>

</html>
```
FILE: styles.css
```
* {
    margin: 0;
    padding: 0;
    box-sizing: border-box;
    list-style: none;
}

body {
    height: 100vh;
    display: flex;
    flex-direction: column;
    overflow: hidden;
    position: relative;
    background: #fff;
    color: #111;
    font: 12px/16px 'Noto Sans', 'Noto Sans CJK SC', sans-serif;
}

button {
    border: 0;
    background: none;
    font: inherit;
    color: inherit;
}

h2, h3, th, b, i {
    font-weight: normal;
    font-style: normal;
    font-size: inherit;
}

svg {
    display: block;
    flex: none;
}

.defs {
    position: absolute;
}

/*顶部标签*/
.tabs {
    display: flex;
    gap: 2px;
    height: 25px;
    padding-top: 1px;
    border-bottom: 1px solid #ababab;
    font-size: 11px;
    color: #444;
}

.tabs button {
    background: #f5f5f5;
    border-radius: 3px 3px 0 0;
}

.tabs .project {
    width: 57px;
    background: #9ec5f5;
    border-radius: 0;
    color: #222;
}

.t-home { width: 65px; }
.t-view { width: 58px; }
.t-tools { width: 67px; }
.t-manage { width: 81px; }
.t-design { width: 103px; }
.t-general { width: 82px; }
.t-equip { width: 98px; }
.t-admin { width: 70px; }

.tabs .active {
    width: 68px;
    margin-bottom: -1px;
    border: 1px solid #9aa3ad;
    border-bottom: 0;
    color: #111;
    font-weight: 600;
}

/*功能区*/
.ribbon {
    display: flex;
    flex: none;
    height: 93px;
    background: #f5f5f5;
    border-bottom: 2px solid #b5b5b5;
}

.group {
    flex: none;
    display: flex;
    flex-direction: column;
    padding-top: 3px;
    border-right: 1px solid #a9bfdd;
}

.group h2 {
    text-align: center;
    line-height: 18px;
}

.tools {
    display: grid;
    height: 70px;
}

.tools > button {
    display: flex;
    flex-direction: column;
    align-items: center;
    padding-top: 2px;
    line-height: 16px;
    white-space: nowrap;
}

.tools > button > svg {
    width: 32px;
    height: 32px;
    margin-bottom: 3px;
}

.g-create .tools { grid-template-columns: 34px 87px; }
.g-modify .tools { grid-template-columns: 44px 74px 66px; }
.g-delete .tools { grid-template-columns: 66px 53px; }
.g-tools .tools { grid-template-columns: 57px 40px 116px 78px 78px 61px; }
.g-penetrate .tools { grid-template-columns: 54px 52px; }
.g-iso .tools { grid-template-columns: 88px; }
.g-supports .tools { grid-template-columns: 84px 44px 68px; }
.g-fab .tools { grid-template-columns: 153px 150px; padding-left: 7px; }
.g-stress .tools { grid-template-columns: 190px; padding-left: 8px; }

.g-tools .small {
    padding-left: 4px;
}

.g-penetrate button:nth-child(2) {
    padding-right: 6px;
}

.small button {
    display: flex;
    align-items: center;
    gap: 7px;
    height: 23px;
    white-space: nowrap;
}

.small svg {
    width: 16px;
    height: 16px;
}

.small .drop {
    margin-left: 2px;
}

.off {
    color: #808080;
}

.drop {
    display: inline-block;
    border: 3px solid transparent;
    border-top: 4px solid #111;
    border-bottom: 0;
    vertical-align: middle;
    margin-left: 3px;
}

.off .drop {
    border-top-color: #666;
}

.drop.below {
    margin: 5px 0 0;
}

.addin {
    flex: none;
    height: 24px;
    padding-top: 1px;
    background: #f5f5f5;
    border-bottom: 1px solid #a0a0a0;
}

.addin button {
    display: block;
    height: 22px;
    padding: 0 7px 0 11px;
    background: #dcdcdc;
    border-left: 2px dotted #7f9fc8;
    border-bottom: 2px solid #9bb3d4;
}

/*主工作区*/
.work {
    flex: 1;
    min-height: 0;
    display: flex;
}

.explorer {
    flex: 0 0 334px;
    display: flex;
    flex-direction: column;
    min-height: 0;
    padding-top: 2px;
    background: linear-gradient(#cfcfcf, #f0f0f0);
    border-right: 1px solid #909090;
    border-bottom: 2px solid #fafafa;
}

.current {
    flex: none;
    height: 19px;
    padding-left: 1px;
    border: 0;
    border-bottom: 1px solid #777;
    background: #d6d6d6 url("data:image/svg+xml,%3Csvg xmlns='http://www.w3.org/2000/svg' width='10' height='6'%3E%3Cpath d='M1 1l4 4 4-4' fill='none' stroke='%23444'/%3E%3C/svg%3E") no-repeat right 4px center;
    appearance: none;
    font: 10px 'Liberation Mono', monospace;
    color: #111;
}

.tree-wrap {
    flex: 1;
    min-height: 0;
    display: flex;
    padding-top: 2px;
}

.tree {
    flex: 1;
    overflow: hidden;
    font: 11px/20px 'Liberation Sans', sans-serif;
}

.tree li,
.tree .sel {
    display: flex;
    align-items: center;
    height: 20px;
    white-space: nowrap;
}

.tree li {
    padding-left: 5px;
}

.tree svg {
    width: 16px;
    height: 16px;
    margin-right: 5px;
}

.tree .tw {
    width: 8px;
    height: 8px;
    margin-right: 7px;
}

.tree .l1 { padding-left: 24px; }
.tree .l2 { padding-left: 43px; }
.tree .l3 { padding-left: 62px; }
.tree .l4 { padding-left: 81px; }

.tree .sel {
    background: #b0c9e4;
    border-radius: 2px;
    margin-left: -2px;
    padding: 0 5px 0 2px;
}

.scroll {
    flex: 0 0 16px;
    display: flex;
    flex-direction: column;
    background: rgba(255, 255, 255, .2);
}

.scroll .up {
    align-self: center;
    margin: 8px 0 7px;
    border: 4px solid transparent;
    border-bottom: 4px solid #111;
    border-top: 0;
}

.scroll .thumb {
    background: #c1c1c1;
}

.explorer .scroll .thumb {
    height: 225px;
    display: flex;
    align-items: center;
    justify-content: center;
}

.grip {
    width: 7px;
    height: 8px;
    background: repeating-linear-gradient(#555 0 1px, #ddd 1px 3px);
}

/*侧边标签*/
.strip {
    flex: 0 0 31px;
    padding-top: 2px;
    background: #c8c8c8;
}

.strip.left {
    padding-right: 2px;
    border-right: 2px solid #d4d4d4;
}

.strip.right {
    flex-basis: 32px;
    padding: 2px 3px 0 1px;
    background: #cdcdcd;
}

.side {
    display: flex;
    flex-direction: column;
    align-items: center;
    border: 1px solid #999;
    border-width: 1px 0;
    background: #d6d6d6;
    font-size: 11px;
    line-height: 14px;
}

.side + .side {
    margin-top: 2px;
}

.side.on {
    background: #b6c4da;
}

.side span {
    writing-mode: vertical-rl;
    margin: 6px 0 9px;
    padding-left: 4px;
}

.side .turn-up {
    transform: rotate(180deg);
    margin: 4px 0 11px;
}

.side button svg {
    width: 8px;
    height: 8px;
    margin: 1px 0 7px;
}

.side .tall {
    width: 16px;
    height: 24px;
    margin-top: 1px;
}

.side .wide {
    width: 24px;
    height: 23px;
    margin-top: 1px;
}

/*三维视图*/
.view {
    flex: 1;
    position: relative;
    overflow: hidden;
    background: linear-gradient(#3a3a3a, #e2e2e2);
}

.scene {
    width: 100%;
    height: 100%;
}

.attrs {
    position: absolute;
    left: 17px;
    top: 15px;
    width: 368px;
    padding: 0 4px;
    background: #c9c9c9;
}

.attrs header {
    display: flex;
    align-items: center;
    height: 30px;
    padding: 0 4px 0 2px;
}

.attrs header .logo {
    width: 24px;
    height: 24px;
}

.attrs header h3 {
    flex: 1;
    padding-left: 4px;
}

.attrs header button svg {
    width: 16px;
    height: 16px;
    color: #2f3e55;
}

.attrs-top {
    display: grid;
    grid-template-columns: 1fr 22px;
    row-gap: 6px;
    padding: 9px 0 11px 9px;
    background: #d1d1d1;
    font: 10px/14px 'Liberation Mono', monospace;
}

.elem {
    grid-column: 1 / 3;
}

.attrs-top label {
    display: flex;
    align-items: center;
    gap: 4px;
}

input[type=checkbox] {
    appearance: none;
    width: 13px;
    height: 13px;
    border: 1px solid #222;
    display: block;
}

input[type=checkbox]:checked {
    background: url("data:image/svg+xml,%3Csvg xmlns='http://www.w3.org/2000/svg' width='11' height='11'%3E%3Cpath d='M1 5l3 4 6-7' fill='none' stroke='%23333' stroke-width='1.300'/%3E%3C/svg%3E");
}

.filter {
    width: 14px;
    height: 14px;
}

.attrs-grid {
    display: flex;
    background: #d6d6d6;
}

.gutter {
    width: 10px;
    margin: 28px 0 0 9px;
    border-left: 1px dotted #888;
    background: repeating-linear-gradient(#999 0 1px, transparent 1px 19px);
}

.attrs table {
    flex: 1;
    border-collapse: collapse;
    font: 11px/16px 'Liberation Sans', sans-serif;
}

.attrs th {
    height: 20px;
    border: 1px solid #bbb;
    border-top: 0;
}

.attrs .name {
    width: 115px;
}

.attrs td {
    height: 19px;
    padding: 0 5px;
    border: 1px solid #606060;
    background: #dedede;
}

.attrs td:first-child {
    background: #d2d2df;
}

.attrs .ro td:last-child {
    background: #c9c9c9;
}

.attrs .hit td,
.attrs .hit td:first-child {
    background: #8fafd8;
}

.attrs td input {
    width: 11px;
    height: 11px;
    border-color: #888;
}

.attrs .scroll {
    flex-basis: 18px;
}

.attrs .split {
    height: 5px;
    border: 1px solid #555;
}

.attrs .scroll .thumb {
    height: 121px;
}

/*右侧工具面板*/
.naki {
    flex: 0 0 244px;
    min-width: 0;
    overflow: hidden;
    display: flex;
    flex-direction: column;
    background: linear-gradient(#d0d0d0, #eee);
    padding-left: 12px;
    font: 12px/16px 'Noto Sans CJK SC', sans-serif;
}

.menu {
    display: flex;
    gap: 20px;
    height: 24px;
    font-size: 11px;
}

.bar {
    display: flex;
    align-items: center;
    height: 46px;
    margin-left: -10px;
    padding-left: 3px;
    border-left: 2px dotted #aaa;
    font-size: 10px;
    white-space: nowrap;
}

.bar button {
    flex: none;
    width: 32px;
    display: flex;
    flex-direction: column;
    align-items: center;
    line-height: 14px;
}

.bar svg {
    width: 22px;
    height: 22px;
    margin-bottom: 3px;
}

.bar i {
    flex: none;
    width: 1px;
    height: 36px;
    margin: 0 3px 0 2px;
    background: #aaa;
}

.pipes {
    height: 225px;
    margin-top: 4px;
    border: 1px solid #111;
    border-right: 0;
    background: rgba(255, 255, 255, .4);
}

.pipes table {
    width: 100%;
    border-collapse: collapse;
    text-align: left;
    font: 11px/16px 'Liberation Sans', sans-serif;
}

.pipes th {
    height: 19px;
    padding-left: 6px;
    border-bottom: 1px solid #888;
    font: 10px 'Liberation Mono', monospace;
}

.pipes td {
    height: 23px;
    padding-left: 4px;
    border-bottom: 1px solid #888;
}

.pipes .chk {
    width: 25px;
    padding: 0 0 0 5px;
}

.pipes td.chk {
    background: #1270bd;
}

.pipes td.chk input {
    background: #ddd;
}

.mto-tab {
    align-self: flex-start;
    z-index: 1;
    width: 52px;
    height: 25px;
    margin-top: 4px;
    border: 1px solid #bbb;
    border-bottom: 0;
    background: #e2e2e2;
}

.mto {
    flex: 1;
    border: 1px solid #c4c4c4;
    border-right: 0;
    background: rgba(255, 255, 255, .2);
    padding: 12px 0 0 7px;
}

.field {
    display: flex;
    align-items: center;
    gap: 6px;
    padding-left: 10px;
    white-space: nowrap;
}

.field select {
    flex: 1;
    height: 25px;
    padding-left: 3px;
    appearance: none;
    border: 1px solid #999;
    border-right: 0;
    background: #cdcdcd;
    font: inherit;
}

.acts {
    display: flex;
    gap: 7px;
    padding: 11px 0 5px 12px;
}

.acts button {
    width: 54px;
    height: 24px;
    border: 1px solid #a0a0a0;
    background: #cdcdcd;
}

.acts .main {
    border: 2px solid #1979ca;
}

.mto fieldset {
    border: 1px solid #c4c4c4;
    border-right: 0;
    height: 200px;
    padding: 5px 0 0 6px;
    white-space: nowrap;
}

.mto legend {
    padding: 0 2px;
    color: #e0182d;
}

.mto p {
    font-family: 'Noto Sans', 'Noto Sans CJK SC', sans-serif;
    line-height: 17px;
}

.views {
    flex: none;
    height: 16px;
    display: flex;
    padding-top: 6px;
    overflow: hidden;
    background: #efefef;
    border-top: 1px solid #aaa;
    font: 10px/16px 'Liberation Mono', monospace;
}

.views .blank {
    width: 42px;
    border-top: 1px solid #000;
    background: #fafafa;
}

.views button {
    height: 18px;
    padding: 0 3px;
    margin-right: auto;
    background: #cfdff5;
}

/*浏览器窗口*/
.edge {
    position: absolute;
    left: 115px;
    top: 445px;
    bottom: 0;
    width: 931px;
    display: flex;
    flex-direction: column;
    border: 1px solid #19485c;
    border-top: 0;
    background: #f7f7f7;
}

.ic {
    width: 16px;
    height: 16px;
}

.wide-ic {
    width: 18px;
    height: 16px;
}

.line {
    fill: none;
    stroke: currentColor;
    stroke-width: 1.2px;
}

.edge-title {
    flex: none;
    display: flex;
    align-items: flex-end;
    height: 41px;
    padding-left: 16px;
    background: #19485c;
    color: #fff;
}

.edge-title > .ic {
    margin-bottom: 8px;
}

.edge-tab {
    display: flex;
    align-items: center;
    width: 240px;
    height: 32px;
    margin-left: 15px;
    padding: 0 8px 0 11px;
    border-radius: 6px 6px 0 0;
    background: #f7f7f7;
    color: #111;
    font-size: 11px;
}

.edge-tab span {
    flex: 1;
    padding-left: 11px;
}

.pdf-ico {
    width: 14px;
    height: 16px;
    border: 1px solid #111;
    border-radius: 0 4px 0 0;
    background: linear-gradient(#fff 4px, #f44 4px 11px, #fff 11px);
    color: #fff;
    font: bold 6px/15px 'Noto Sans', sans-serif;
    text-align: center;
}

.new {
    margin: 0 0 8px 10px;
}

.win {
    display: flex;
    align-self: flex-start;
    gap: 30px;
    margin-left: auto;
    padding: 7px 15px 0 0;
}

.edge-nav {
    flex: none;
    display: flex;
    align-items: center;
    height: 39px;
    padding: 0 6px;
    border-bottom: 1px solid #d0d0d0;
}

.edge-nav > button {
    width: 45px;
    display: flex;
    justify-content: center;
}

.edge-nav > button:nth-child(-n+4) {
    width: 44px;
}

.edge .faint {
    color: #c2c2c2;
}

.edge .dim {
    color: #666;
}

.user {
    width: 22px;
    height: 22px;
}

.addr {
    flex: 1;
    min-width: 0;
    display: flex;
    align-items: center;
    height: 30px;
    margin: 0 5px 0 6px;
    padding: 0 10px 0 14px;
    border-radius: 4px;
    background: #fff;
    color: #777;
}

.addr span {
    margin-left: 8px;
    padding-right: 10px;
    border-right: 1px solid #999;
    font: 14px/16px 'Noto Sans CJK SC', sans-serif;
}

.addr input {
    flex: 1;
    min-width: 0;
    padding-left: 13px;
    border: 0;
    font: 13px 'Noto Sans', sans-serif;
    color: #222;
}

.addr svg:last-child {
    width: 18px;
    margin-left: 20px;
}

.edge-body {
    flex: 1;
    min-height: 0;
    display: flex;
}

.edge-main {
    flex: 1;
    min-width: 0;
    display: flex;
    flex-direction: column;
}

.pdf-bar {
    flex: none;
    display: flex;
    align-items: center;
    height: 41px;
    padding: 0 5px 0 4px;
    border-bottom: 1px solid #b5b5b5;
    color: #333;
}

.pdf-bar > input {
    width: 40px;
    height: 32px;
    border: 1px solid #aaa;
    border-radius: 2px;
    background: #f7f7f7;
    color: #666;
    text-align: center;
    font: 12px 'Noto Sans', sans-serif;
}

.of {
    color: #666;
    padding: 0 20px 0 10px;
}

.pdf-tools {
    margin-left: auto;
    display: flex;
    align-items: center;
}

.pdf-tools button {
    width: 40px;
    height: 32px;
    display: flex;
    align-items: center;
    justify-content: center;
}

.pdf-tools .chev {
    width: 28px;
}

.chev svg {
    width: 8px;
    height: 8px;
}

.pdf-tools i {
    width: 1px;
    height: 16px;
    margin: 0 4px;
    background: #bbb;
}

.pdf-tools .down {
    background: #e6e6e6;
    border-radius: 2px;
}

.doc {
    flex: 1;
    min-height: 0;
    display: flex;
    overflow: hidden;
    background: #fff;
    font: 12px/15px 'Liberation Sans', sans-serif;
}

.rest {
    flex: 0 0 273px;
    align-self: flex-end;
    padding: 0 0 6px 2px;
}

.sheet {
    flex: 0 0 618px;
    border-left: 2px solid #333;
    border-right: 1px solid #777;
}

.sheet table {
    width: 100%;
    height: 100%;
    table-layout: fixed;
    border-collapse: collapse;
}

.c-no { width: 37px; }
.c-desc { width: 333px; }
.c-ns { width: 96px; }
.c-code { width: 77px; }
.c-qty { width: 46px; }

.sheet td,
.sheet th {
    vertical-align: top;
    text-align: left;
    white-space: nowrap;
}

.sheet td:first-child,
.sheet th:first-child {
    border-right: 2px solid #777;
    padding-left: 5px;
    text-align: center;
}

.sheet td:nth-child(2),
.sheet th:nth-child(2) {
    padding-left: 24px;
}

.sheet td:nth-child(5),
.sheet th:nth-child(5) {
    text-align: center;
}

.sheet .title td:nth-child(2) {
    padding: 25px 0 0 20px;
}

.title b {
    display: inline-block;
    border: 1px solid #222;
    padding: 3px 12px 4px 11px;
}

.head th {
    padding-top: 23px;
}

.head span,
.sec span {
    display: inline-block;
    text-align: left;
    padding-bottom: 3px;
    border-bottom: 1px solid #333;
}

.sheet .sec td {
    padding: 13px 0 0 17px;
}

.sheet .head + .sec td {
    padding-top: 10px;
}

.first td {
    padding-top: 10px;
}

.fill {
    height: 100%;
}

.hscroll {
    flex: none;
    display: flex;
    align-items: center;
    height: 17px;
    padding-left: 6px;
    background: #f0f0f0;
}

.hscroll i {
    border: 4px solid transparent;
    border-right: 4px solid #555;
    border-left: 0;
}

.hscroll div {
    width: 401px;
    height: 13px;
    margin-left: auto;
    background: #c1c1c1;
}

.edge .scroll {
    background: #f0f0f0;
}

.edge .scroll .up {
    border-bottom-color: #555;
}

/*材料表预览窗口*/
.preview {
    position: absolute;
    left: 1000px;
    right: 0;
    top: 607px;
    bottom: 0;
    display: flex;
    flex-direction: column;
    border: 1px solid #999;
    border-width: 1px 0 0 1px;
    background: #f0f0f0;
    font: 12px/16px 'Noto Sans CJK SC', sans-serif;
}

.preview header {
    display: flex;
    align-items: center;
    gap: 5px;
    height: 30px;
    padding-left: 6px;
    background: #fff;
    color: #999;
}

.preview header svg {
    width: 16px;
    height: 16px;
}

.preview-tabs {
    display: flex;
    align-items: flex-end;
    height: 31px;
    padding-left: 11px;
    font-size: 11px;
}

.preview-tabs button {
    width: 66px;
    height: 18px;
    border: 1px solid #d5d5d5;
    border-bottom: 0;
    white-space: nowrap;
    line-height: 16px;
}

.preview-tabs .active {
    width: 51px;
    height: 21px;
    margin-bottom: -1px;
    background: #fff;
    z-index: 1;
}

.preview-page {
    flex: 1;
    margin-left: 10px;
    padding: 7px 0 0 10px;
    border: 1px solid #d5d5d5;
    border-width: 1px 0 0 1px;
    background: #fff;
}

.preview-box {
    display: flex;
    flex-direction: column;
    height: 100%;
    overflow: hidden;
    border: 1px solid #222;
    border-width: 2px 0 0 1px;
}

.preview-box table {
    table-layout: fixed;
    width: 800px;
    border-collapse: collapse;
    text-align: left;
    white-space: nowrap;
    font: 10px/14px 'Liberation Mono', monospace;
}

.preview-box th {
    height: 18px;
    padding-left: 7px;
    border-right: 1px solid #ddd;
    border-bottom: 1px solid #999;
}

.preview-box td {
    height: 27px;
    padding-left: 2px;
    border: 1px solid #999;
    border-left: 0;
}

.preview-box .cur {
    background: #0078d7;
    color: #fff;
}

.mark {
    margin-top: auto;
    padding: 0 9px 8px;
    text-align: right;
    font: 15px/22px 'Open Sans', sans-serif;
    color: #e0e0e0;
}
```
